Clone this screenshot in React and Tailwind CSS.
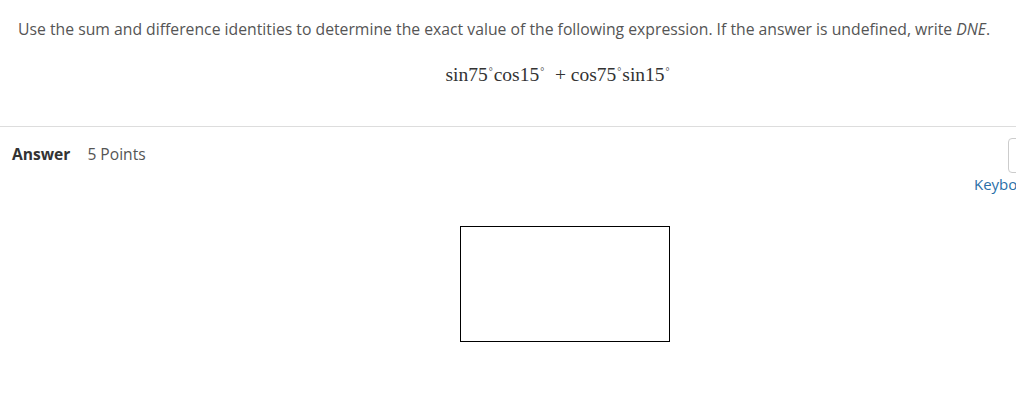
export default function App() {
  const deg = <sup className="text-[10px] relative -top-[6px] mx-[1px]">°</sup>;
  return (
    <div className="w-[1016px] h-[406px] bg-white overflow-hidden relative" style={{ fontFamily: '"Open Sans", sans-serif' }}>
      <div className="pt-[17px] pl-[18px] pr-[10px] text-[15.75px] text-[#555] leading-[24px] whitespace-nowrap">
        Use the sum and difference identities to determine the exact value of the following expression. If the answer is undefined, write <i>DNE</i>.
      </div>
      <div className="mt-[22px] flex justify-center pl-[100px] text-[19.5px] text-[#333] leading-[24px]" style={{ fontFamily: '"Liberation Serif", serif' }}>
        <span>sin75{deg}cos15{deg}&nbsp;&nbsp;+ cos75{deg}sin15{deg}</span>
      </div>
      <div className="mt-[39px] border-t border-[#ddd]"></div>
      <div className="flex">
        <div className="flex-1">
          <div className="flex items-center pt-[15px] pl-[12px] text-[15.6px] text-[#555] leading-[24px]">
            <span className="font-bold text-[#333]">Answer</span>
            <span className="ml-[17px]">5 Points</span>
          </div>
          <div className="mt-[60px] flex justify-center pl-[156px]">
            <div className="w-[210px] h-[116px] border-[1.5px] border-black"></div>
          </div>
        </div>
        <div className="w-[42px] pt-[11px] flex flex-col items-start">
          <div className="ml-[34px] w-[40px] h-[35px] border border-[#ccc] rounded-[4px]"></div>
          <div className="mt-[0px] text-[15px] text-[#2a6fa8] leading-[22px] whitespace-nowrap">Keyboard</div>
        </div>
      </div>
    </div>
  );
}
